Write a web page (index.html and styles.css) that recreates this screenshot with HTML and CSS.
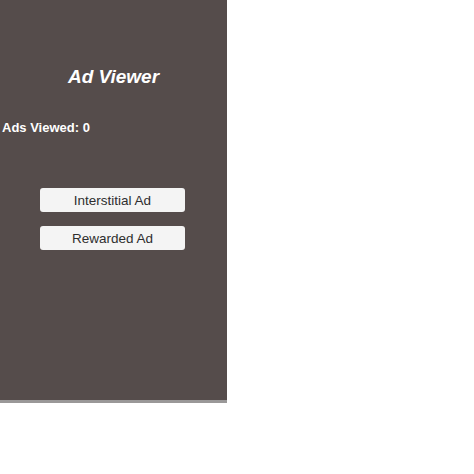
FILE: index.html
```html
<!DOCTYPE html>
<html lang="en">
<head>
    <meta charset="UTF-8">
    <title>Ad Viewer</title>
    <link rel="stylesheet" href="styles.css">
</head>
<body>
    <div class="panel">
        <h1 class="title">Ad Viewer</h1>
        <p class="counter">Ads Viewed: 0</p>
        <div class="actions">
            <button class="ad-button">Interstitial Ad</button>
            <button class="ad-button">Rewarded Ad</button>
        </div>
    </div>
</body>
</html>
```

FILE: styles.css
```css
/* Page reset */
body {
    margin: 0;
    background-color: #ffffff;
    font-family: "Liberation Sans", Arial, sans-serif;
}

/* Dark app panel */
.panel {
    width: 227px;
    height: 400px;
    background-color: #554c4b;
    border-bottom: 3px solid #9a9898;
    display: flex;
    flex-direction: column;
}

/* Heading */
.title {
    margin: 65px 0 0 0;
    font-size: 19px;
    font-weight: 700;
    font-style: italic;
    text-align: center;
    color: #ffffff;
    line-height: 24px;
}

/* Counter label */
.counter {
    margin: 31px 0 0 2px;
    font-size: 13px;
    font-weight: 700;
    color: #ffffff;
    line-height: 16px;
}

/* Button stack */
.actions {
    margin-top: 52px;
    padding-left: 40px;
    display: flex;
    flex-direction: column;
    gap: 14px;
}

.ad-button {
    width: 145px;
    height: 24px;
    padding: 0;
    border: none;
    border-radius: 3px;
    background-color: #f4f4f4;
    color: #2e2e2e;
    font-family: "Liberation Sans", Arial, sans-serif;
    font-size: 13.5px;
    cursor: pointer;
}
```
